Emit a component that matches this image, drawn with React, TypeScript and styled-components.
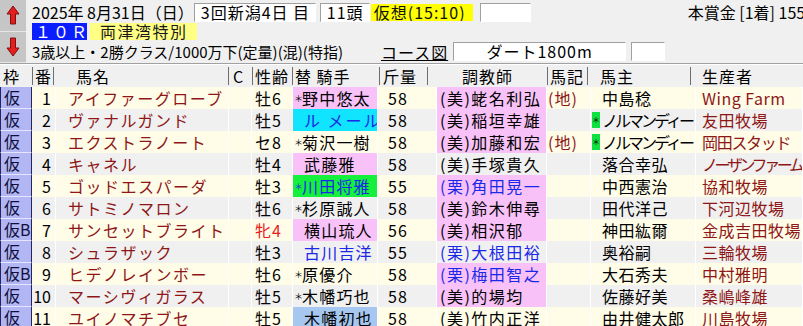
import React from "react";
import styled, { createGlobalStyle } from "styled-components";

const GlobalStyle = createGlobalStyle`
  html, body {
    margin: 0;
    padding: 0;
    background: #f0f0f0;
    overflow: hidden;
  }
  body {
    width: 803px;
    height: 326px;
    font-family: "Noto Sans CJK JP", "Noto Sans", sans-serif;
    color: #000;
  }
`;

const Page = styled.div`
  width: 803px;
  height: 326px;
  overflow: hidden;
  background: #f0f0f0;
`;

const TopPanel = styled.div`
  display: flex;
  height: 63px;
`;

const ArrowColumn = styled.div`
  display: flex;
  flex-direction: column;
  width: 26px;
  margin-right: 6px;
`;

const ArrowButton = styled.div`
  flex: 1;
  display: flex;
  align-items: center;
  justify-content: center;
  background: #c6c6c6;
  border-bottom: 1px solid #e6e6e6;
`;

const InfoColumn = styled.div`
  flex: 1;
  display: flex;
  flex-direction: column;
  min-width: 0;
`;

const InfoLine = styled.div<{ $h: number; $top?: number }>`
  display: flex;
  align-items: center;
  height: ${(p) => p.$h}px;
  margin-top: ${(p) => p.$top ?? 0}px;
  white-space: pre;
`;

const PlainText = styled.span<{ $size?: number; $ml?: number }>`
  font-size: ${(p) => p.$size ?? 16}px;
  line-height: 18px;
  margin-left: ${(p) => p.$ml ?? 0}px;
  flex-shrink: 0;
`;

const FieldBox = styled.div<{ $w: number; $ml?: number; $align?: string; $pad?: number }>`
  box-sizing: border-box;
  width: ${(p) => p.$w}px;
  height: 19px;
  margin-left: ${(p) => p.$ml ?? 0}px;
  background: #ffffff;
  border-top: 1px solid #a0a0a0;
  border-left: 1px solid #a0a0a0;
  border-bottom: 1px solid #ffffff;
  border-right: 1px solid #ffffff;
  font-size: 16px;
  line-height: 17px;
  padding-left: ${(p) => p.$pad ?? 5}px;
  text-align: ${(p) => p.$align ?? "left"};
  letter-spacing: 1px;
  flex-shrink: 0;
  overflow: hidden;
`;

const HighlightBox = styled.div<{ $w: number; $ml?: number; $bg: string; $color: string; $spacing?: number; $pad?: number }>`
  box-sizing: border-box;
  width: ${(p) => p.$w}px;
  height: 17px;
  margin-left: ${(p) => p.$ml ?? 0}px;
  background: ${(p) => p.$bg};
  color: ${(p) => p.$color};
  font-size: 16px;
  line-height: 17px;
  padding-left: ${(p) => p.$pad ?? 4}px;
  letter-spacing: ${(p) => p.$spacing ?? 1}px;
  flex-shrink: 0;
  overflow: hidden;
`;

const LinkText = styled.span`
  font-size: 16px;
  line-height: 18px;
  margin-left: 38px;
  text-decoration: underline;
  letter-spacing: 1px;
  flex-shrink: 0;
`;

const Separator = styled.div`
  height: 0;
  border-top: 1px solid #a0a0a0;
  border-bottom: 1px solid #ffffff;
`;

const HeaderRow = styled.div`
  display: grid;
  grid-template-columns: 32px 21px 175px 24px 40px 87px 48px 120px 40px 103px 1fr;
  align-items: center;
  height: 22px;
  background: #f0f0f0;
`;

const HeaderCell = styled.div<{ $pad?: number; $align?: string; $first?: boolean }>`
  height: 18px;
  line-height: 18px;
  font-size: 16px;
  letter-spacing: 1px;
  white-space: pre;
  overflow: hidden;
  padding-left: ${(p) => p.$pad ?? 3}px;
  text-align: ${(p) => p.$align ?? "left"};
  border-left: ${(p) => (p.$first ? "none" : "1px solid #6e6e6e")};
`;

const BodyRow = styled.div<{ $alt: boolean }>`
  display: grid;
  grid-template-columns: 32px 24px 173px 23px 41px 85px 59px 110px 44px 105px 1fr;
  height: 22px;
  background: ${(p) => (p.$alt ? "#f0f0f0" : "#fffde8")};
`;

const FrameCell = styled.div`
  box-sizing: border-box;
  background: #b2b6f2;
  border-left: 1px solid #24245e;
  border-right: 1px solid #24245e;
  border-bottom: 1px solid #e4e6ff;
  font-size: 16px;
  line-height: 21px;
  padding-left: 3px;
  color: #101040;
  white-space: pre;
`;

const Cell = styled.div<{ $bg?: string; $color?: string; $pad?: number; $align?: string; $spacing?: number }>`
  box-sizing: border-box;
  display: flex;
  align-items: center;
  justify-content: ${(p) => (p.$align === "right" ? "flex-end" : "flex-start")};
  background: ${(p) => p.$bg ?? "transparent"};
  color: ${(p) => p.$color ?? "#000"};
  border-right: 1px solid #ffffff;
  font-size: 16px;
  line-height: 22px;
  letter-spacing: ${(p) => p.$spacing ?? 1}px;
  padding-left: ${(p) => (p.$align === "right" ? 0 : p.$pad ?? 3)}px;
  padding-right: ${(p) => (p.$align === "right" ? p.$pad ?? 4 : 0)}px;
  white-space: pre;
  overflow: hidden;
`;

const Star = styled.span`
  display: inline-block;
  width: 8px;
  font-size: 9px;
  line-height: 12px;
  text-align: center;
  letter-spacing: 0;
  margin-top: 2px;
  flex-shrink: 0;
`;

const OwnerMark = styled.span<{ $on: boolean }>`
  display: inline-block;
  width: 8px;
  height: 16px;
  margin-right: 2px;
  background: ${(p) => (p.$on ? "#10e040" : "transparent")};
  font-size: 8px;
  line-height: 16px;
  text-align: center;
  letter-spacing: 0;
  flex-shrink: 0;
`;

const ArrowIcon = ({ down }: { down?: boolean }) => (
  <svg width="14" height="20" viewBox="0 0 14 20" style={{ transform: down ? "rotate(180deg)" : undefined }}>
    <polygon
      points="7,1 13,9 9.5,9 9.5,19 4.5,19 4.5,9 1,9"
      fill="#e51d1d"
      stroke="#7a1010"
      strokeWidth="1"
      strokeLinejoin="miter"
    />
  </svg>
);

const PINK = "#f8c2f8";
const CYAN = "#10e4ff";
const GREEN = "#14f03c";
const LBLUE = "#a6c8f0";
const RED_NAME = "#8e1616";
const BLUE = "#1a28e8";

type Row = {
  frame: string;
  no: string;
  name: string;
  sex: string;
  sexRed?: boolean;
  star?: boolean;
  jockey: string;
  jBg?: string;
  jColor?: string;
  jSpacing?: number;
  weight: string;
  trainer: string;
  tBg?: string;
  tBlue?: boolean;
  mark: string;
  ownerMark?: boolean;
  owner: string;
  oSpacing?: number;
  breeder: string;
  bSpacing?: number;
};

const rows: Row[] = [
  { frame: "仮", no: "1", name: "アイファーグローブ", sex: "牡6", star: true, jockey: "野中悠太", jBg: PINK, weight: "58", trainer: "(美)蛯名利弘", tBg: PINK, mark: "(地)", owner: "中島稔", breeder: "Wing Farm" },
  { frame: "仮", no: "2", name: "ヴァナルガンド", sex: "牡5", jockey: "ル メール", jBg: CYAN, jColor: BLUE, jSpacing: 2, weight: "58", trainer: "(美)稲垣幸雄", tBg: PINK, mark: "", ownerMark: true, owner: "ノルマンディー", oSpacing: -3, breeder: "友田牧場" },
  { frame: "仮", no: "3", name: "エクストラノート", sex: "セ8", star: true, jockey: "菊沢一樹", weight: "58", trainer: "(美)加藤和宏", tBg: PINK, mark: "(地)", ownerMark: true, owner: "ノルマンディー", oSpacing: -3, breeder: "岡田スタッド", bSpacing: -1.3 },
  { frame: "仮", no: "4", name: "キャネル", sex: "牡4", jockey: "武藤雅", jBg: PINK, weight: "58", trainer: "(美)手塚貴久", mark: "", owner: "落合幸弘", breeder: "ノーザンファーム", bSpacing: -3.4 },
  { frame: "仮", no: "5", name: "ゴッドエスパーダ", sex: "牡3", star: true, jockey: "川田将雅", jBg: GREEN, jColor: BLUE, weight: "55", trainer: "(栗)角田晃一", tBg: PINK, tBlue: true, mark: "", owner: "中西憲治", breeder: "協和牧場" },
  { frame: "仮", no: "6", name: "サトミノマロン", sex: "牡6", star: true, jockey: "杉原誠人", weight: "58", trainer: "(美)鈴木伸尋", tBg: PINK, mark: "", owner: "田代洋己", breeder: "下河辺牧場" },
  { frame: "仮B", no: "7", name: "サンセットブライト", sex: "牝4", sexRed: true, jockey: "横山琉人", jBg: PINK, weight: "56", trainer: "(美)相沢郁", tBg: PINK, mark: "", owner: "神田紘爾", breeder: "金成吉田牧場" },
  { frame: "仮", no: "8", name: "シュラザック", sex: "牡3", jockey: "古川吉洋", jColor: BLUE, weight: "55", trainer: "(栗)大根田裕", tBlue: true, mark: "", owner: "奥裕嗣", breeder: "三輪牧場" },
  { frame: "仮B", no: "9", name: "ヒデノレインボー", sex: "牡6", star: true, jockey: "原優介", weight: "58", trainer: "(栗)梅田智之", tBg: PINK, tBlue: true, mark: "", owner: "大石秀夫", breeder: "中村雅明" },
  { frame: "仮", no: "10", name: "マーシヴィガラス", sex: "牡5", star: true, jockey: "木幡巧也", weight: "58", trainer: "(美)的場均", tBg: PINK, mark: "", owner: "佐藤好美", breeder: "桑嶋峰雄" },
  { frame: "仮", no: "11", name: "ユイノマチブセ", sex: "牡5", jockey: "木幡初也", jBg: LBLUE, weight: "58", trainer: "(美)竹内正洋", mark: "", owner: "由井健太郎", breeder: "川島牧場" },
];

export default function App() {
  return (
    <Page>
      <GlobalStyle />
      <TopPanel>
        <ArrowColumn>
          <ArrowButton>
            <ArrowIcon />
          </ArrowButton>
          <ArrowButton>
            <ArrowIcon down />
          </ArrowButton>
        </ArrowColumn>
        <InfoColumn>
          <InfoLine $h={20} $top={2}>
            <PlainText>2025年 8月31日（日）</PlainText>
            <FieldBox $w={122} $ml={0} $pad={6}>3回新潟4日 目</FieldBox>
            <FieldBox $w={50} $ml={4} $pad={6}>11頭</FieldBox>
            <HighlightBox $w={102} $ml={1} $bg="#ffff00" $color="#101010" $pad={3}>
              仮想(15:10)
            </HighlightBox>
            <FieldBox $w={51} $ml={7} />
            <PlainText $ml={157}>本賞金 [1着] 1550万円</PlainText>
          </InfoLine>
          <InfoLine $h={17} $top={1}>
            <HighlightBox $w={55} $bg="#0a1eff" $color="#ffffff" $spacing={2} $pad={3}>
              １０Ｒ
            </HighlightBox>
            <HighlightBox $w={107} $ml={3} $bg="#ffff84" $color="#1a1a1a" $spacing={1.5} $pad={10}>
              両津湾特別
            </HighlightBox>
          </InfoLine>
          <InfoLine $h={19} $top={2}>
            <PlainText $size={15}>3歳以上・2勝クラス/1000万下(定量)(混)(特指)</PlainText>
            <LinkText>コース図</LinkText>
            <FieldBox $w={173} $ml={5} $align="center" $pad={0}>
              ダート1800m
            </FieldBox>
            <FieldBox $w={34} $ml={5} />
          </InfoLine>
        </InfoColumn>
      </TopPanel>
      <Separator />
      <HeaderRow>
        <HeaderCell $first>枠</HeaderCell>
        <HeaderCell $pad={2}>番</HeaderCell>
        <HeaderCell $pad={22}>馬名</HeaderCell>
        <HeaderCell $pad={4}>C</HeaderCell>
        <HeaderCell $pad={2}>性齢</HeaderCell>
        <HeaderCell $pad={2}>替 騎手</HeaderCell>
        <HeaderCell $pad={3}>斤量</HeaderCell>
        <HeaderCell $pad={0} $align="center">調教師</HeaderCell>
        <HeaderCell $pad={2}>馬記</HeaderCell>
        <HeaderCell $pad={12}>馬主</HeaderCell>
        <HeaderCell $pad={11}>生産者</HeaderCell>
      </HeaderRow>
      {rows.map((r, i) => (
        <BodyRow key={r.no} $alt={i % 2 === 1}>
          <FrameCell>{r.frame}</FrameCell>
          <Cell $align="right" $pad={4} $spacing={0}>{r.no}</Cell>
          <Cell $pad={12} $color={RED_NAME} $spacing={1.5}>{r.name}</Cell>
          <Cell />
          <Cell $pad={3} $color={r.sexRed ? "#e81c1c" : "#000"}>{r.sex}</Cell>
          <Cell $pad={r.star ? 1 : 11} $bg={r.jBg} $color={r.jColor} $spacing={r.jSpacing ?? 1.2}>
            {r.star ? <Star>＊</Star> : null}
            {r.jockey}
          </Cell>
          <Cell $pad={10}>{r.weight}</Cell>
          <Cell $pad={3} $bg={r.tBg} $color={r.tBlue ? BLUE : "#000"} $spacing={1.5}>{r.trainer}</Cell>
          <Cell $pad={1} $color={RED_NAME}>{r.mark}</Cell>
          <Cell $pad={1} $spacing={r.oSpacing ?? 0.5}>
            <OwnerMark $on={!!r.ownerMark}>{r.ownerMark ? "＊" : ""}</OwnerMark>
            {r.owner}
          </Cell>
          <Cell $pad={6} $color={RED_NAME} $spacing={r.bSpacing ?? 0.5}>{r.breeder}</Cell>
        </BodyRow>
      ))}
    </Page>
  );
}
